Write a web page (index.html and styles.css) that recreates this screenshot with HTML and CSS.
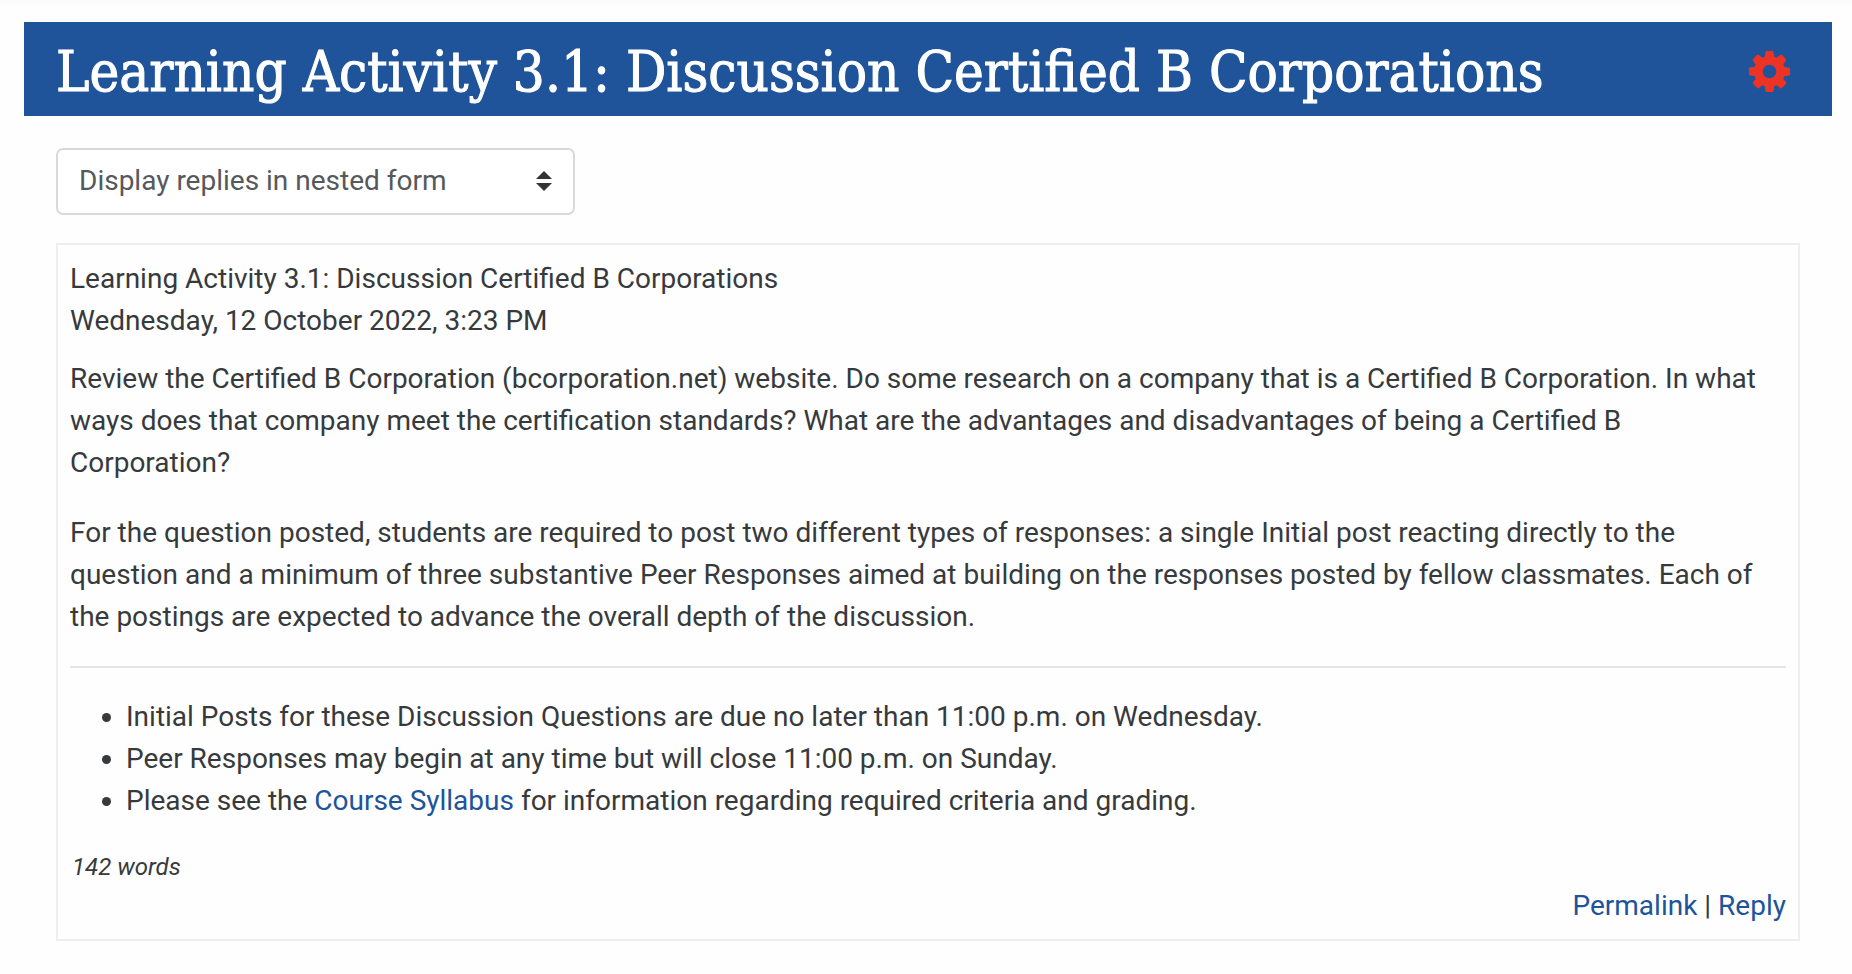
FILE: index.html
```html
<!DOCTYPE html>
<html lang="en">
<head>
<meta charset="utf-8">
<title>Learning Activity 3.1: Discussion Certified B Corporations</title>
<link rel="stylesheet" href="styles.css">
</head>
<body>
<main class="page">
  <header class="banner">
    <h1 class="banner-title">Learning Activity 3.1: Discussion Certified B Corporations</h1>
    <button class="settings" type="button" aria-label="Settings">
      <svg class="settings-icon" viewBox="0 0 1536 1536" aria-hidden="true"><path fill="currentColor" d="M1024 768q0-106-75-181t-181-75-181 75-75 181 75 181 181 75 181-75 75-181zm512-109v222q0 12-8 23t-20 13l-185 28q-19 54-39 91 35 50 107 138 10 12 10 25t-9 23q-27 37-99 108t-94 71q-12 0-26-9l-138-108q-44 23-91 38-16 136-29 186-7 28-36 28h-222q-14 0-24.500-8.500t-11.500-21.500l-28-184q-49-16-90-37l-141 107q-10 9-25 9-14 0-25-11-126-114-165-168-7-10-7-23 0-12 8-23 15-21 51-66.500t54-70.500q-27-50-41-99l-183-27q-13-2-21-12.500t-8-23.500v-222q0-12 8-23t19-13l186-28q14-46 39-92-40-57-107-138-10-12-10-24 0-10 9-23 26-36 98.500-107.500t94.500-71.500q13 0 26 10l138 107q44-23 91-38 16-136 29-186 7-28 36-28h222q14 0 24.500 8.500t11.500 21.500l28 184q49 16 90 37l142-107q9-9 24-9 13 0 25 10 129 119 165 170 7 8 7 22 0 12-8 23-15 21-51 66.500t-54 70.500q26 50 41 98l183 28q13 2 21 12.500t8 23.500z"/></svg>
    </button>
  </header>
  <div class="content">
    <form class="mode">
      <select class="mode-select" aria-label="Display mode">
        <option>Display replies in nested form</option>
      </select>
      <svg class="mode-arrows" viewBox="0 0 16 20" aria-hidden="true"><path fill="currentColor" d="M8 0L16 8H0zM0 12H16L8 20z"/></svg>
    </form>
    <article class="post">
      <header class="post-header">
        <div>Learning Activity 3.1: Discussion Certified B Corporations</div>
        <time datetime="2022-10-12T15:23">Wednesday, 12 October 2022, 3:23 PM</time>
      </header>
      <div class="post-body">
        <p>Review the Certified B Corporation (bcorporation.net) website. Do some research on a company that is a Certified B Corporation. In what ways does that company meet the certification standards? What are the advantages and disadvantages of being a Certified B Corporation?</p>
        <p>For the question posted, students are required to post two different types of responses: a single Initial post reacting directly to the question and a minimum of three substantive Peer Responses aimed at building on the responses posted by fellow classmates. Each of the postings are expected to advance the overall depth of the discussion.</p>
        <hr class="rule">
        <ul class="notes">
          <li>Initial Posts for these Discussion Questions are due no later than 11:00 p.m. on Wednesday.</li>
          <li>Peer Responses may begin at any time but will close 11:00 p.m. on Sunday.</li>
          <li>Please see the <a href="#syllabus">Course Syllabus</a> for information regarding required criteria and grading.</li>
        </ul>
        <div class="word-count">142 words</div>
      </div>
      <footer class="post-actions"><a href="#permalink">Permalink</a> | <a href="#reply">Reply</a></footer>
    </article>
  </div>
</main>
</body>
</html>
```
FILE: styles.css
```css
* {
  box-sizing: border-box;
}

body {
  margin: 0;
  background: #fefefe linear-gradient(#f9f9f9, #fefefe 8px) no-repeat;
  color: #373a3c;
  font: 28px/42px Roboto, "Liberation Sans", sans-serif;
}

a {
  color: #20549a;
  text-decoration: none;
}

.page {
  padding: 22px 20px 34px 24px;
}

.banner {
  display: flex;
  align-items: center;
  justify-content: space-between;
  min-height: 94px;
  padding: 5px 42px 0 32px;
  background: #20549a;
}

.banner-title {
  margin: 0;
  color: #fff;
  font: 400 56px/64px "Roboto Slab", "DejaVu Serif Condensed", "DejaVu Serif", serif;
  -webkit-text-stroke: 1px #fff;
}

.settings {
  display: flex;
  padding: 0;
  border: 0;
  background: none;
  color: #ed3424;
}

.settings-icon {
  width: 41px;
  height: 41px;
}

.content {
  padding: 32px 32px 0;
}

.mode {
  position: relative;
  width: 519px;
  max-width: 100%;
  margin-bottom: 28px;
}

.mode-select {
  display: block;
  width: 100%;
  height: 67px;
  padding: 0 60px 2px 21px;
  border: 2px solid #d9d9d9;
  border-radius: 7px;
  appearance: none;
  background: #fff;
  color: #55595c;
  font: inherit;
}

.mode-arrows {
  position: absolute;
  top: 23px;
  right: 23px;
  width: 16px;
  height: 20px;
  color: #333;
  pointer-events: none;
}

.post {
  padding: 13px 12px 12px;
  border: 2px solid #eee;
}

.post-header {
  margin-bottom: 16px;
}

.post-body p {
  margin: 0 0 28px;
}

.rule {
  height: 2px;
  margin: 0 0 28px;
  border: 0;
  background: #e5e5e5;
}

.notes {
  margin: 0 0 28px;
  padding-left: 56px;
}

.word-count {
  padding-left: 2px;
  font-size: 24px;
  font-style: italic;
  line-height: 35px;
}

.post-actions {
  text-align: right;
}
```
